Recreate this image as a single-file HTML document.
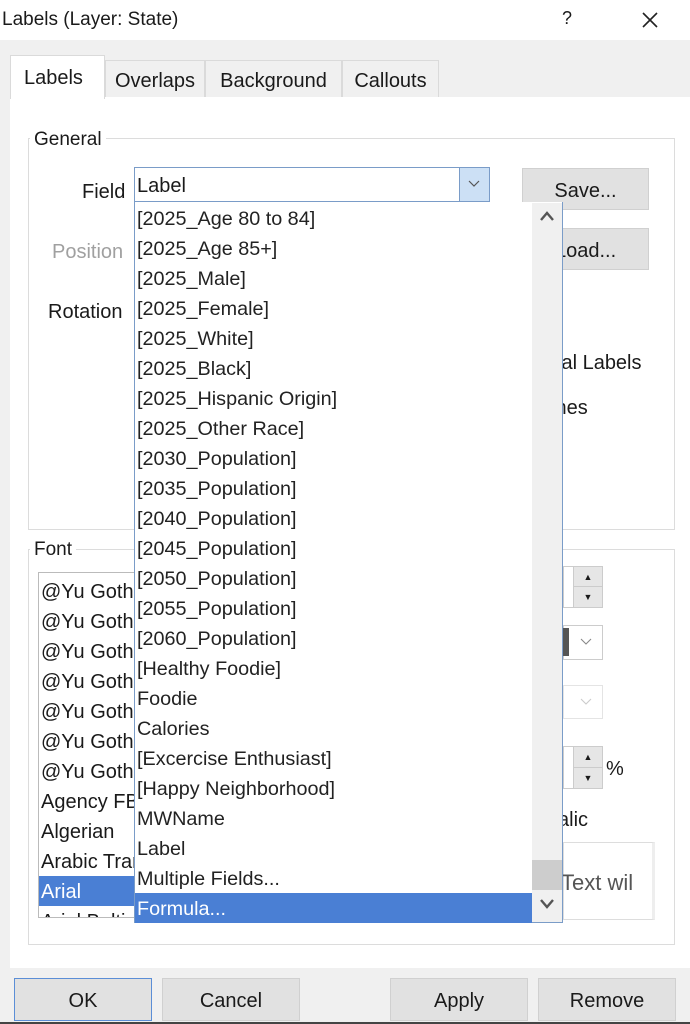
<!DOCTYPE html>
<html><head><meta charset="utf-8"><style>
*{box-sizing:border-box;margin:0;padding:0}
body{width:690px;height:1024px;background:#f0f0f0;font-family:"Liberation Sans",sans-serif;color:#1a1a1a;position:relative;overflow:hidden;font-size:18px}
.a{position:absolute;white-space:nowrap}
.btn{position:absolute;background:#e1e1e1;border:1px solid #d0d0d0;text-align:center;line-height:44px;font-size:20px}
.tab{position:absolute;top:60px;height:37px;background:#f0f0f0;border:1px solid #dadada;border-bottom:none;line-height:40px;font-size:20px;text-align:center}
.grp{position:absolute;border:1px solid #dcdcdc}
.li{height:30px;line-height:32px;padding-left:2px}
.spin{position:absolute;width:30px;background:#e6e6e6;border:1px solid #ccc}
.spin div{height:50%;display:flex;align-items:center;justify-content:center;font-size:9px;border-bottom:1px solid #ccc}
</style></head><body>
<div class="a" style="left:0;top:0;width:690px;height:40px;background:#fff"></div>
<div class="a" style="left:2px;top:9px;font-size:19px">Labels (Layer: State)</div>
<div class="a" style="left:562px;top:8px;font-size:18px">?</div>
<svg class="a" style="left:641px;top:11px" width="18" height="18" viewBox="0 0 18 18"><path d="M2 2L16 16M16 2L2 16" stroke="#222" stroke-width="1.6"/></svg>

<div class="tab" style="left:105px;width:100px">Overlaps</div>
<div class="tab" style="left:205px;width:137px">Background</div>
<div class="tab" style="left:342px;width:97px">Callouts</div>
<div class="a" style="left:10px;top:97px;width:680px;height:871px;background:#fff"></div>
<div class="a" style="left:10px;top:55px;width:95px;height:44px;background:#fff;border:1px solid #dadada;border-bottom:none;font-size:20px;line-height:44px;padding-left:13px">Labels</div>

<div class="grp" style="left:28px;top:138px;width:647px;height:392px"></div>
<div class="a" style="left:30px;top:129px;background:#fff;padding:0 4px;font-size:19px">General</div>
<div class="a" style="left:82px;top:181px;font-size:20px">Field</div>
<div class="a" style="left:52px;top:241px;font-size:20px;color:#a0a0a0">Position</div>
<div class="a" style="left:48px;top:301px;font-size:20px">Rotation</div>
<div class="a" style="left:134px;top:167px;width:356px;height:35px;border:1px solid #7a9cc8;background:#fff"></div>
<div class="a" style="left:137px;top:175px;font-size:20px">Label</div>
<div class="a" style="left:459px;top:168px;width:30px;height:33px;background:#cce0f5;border-left:1px solid #7a9cc8"></div>
<svg class="a" style="left:468px;top:180px" width="12" height="8" viewBox="0 0 12 8"><path d="M1 1L6 6L11 1" stroke="#555" fill="none" stroke-width="1.2"/></svg>
<div class="btn" style="left:522px;top:168px;width:127px;height:42px">Save...</div>
<div class="btn" style="left:522px;top:228px;width:127px;height:42px;text-align:left;padding-left:32px">Load...</div>
<div class="a" style="left:557px;top:352px;font-size:20px">ial Labels</div>
<div class="a" style="left:551px;top:397px;font-size:20px">ines</div>

<div class="grp" style="left:28px;top:549px;width:647px;height:396px"></div>
<div class="a" style="left:30px;top:539px;background:#fff;padding:0 4px;font-size:19px">Font</div>
<div class="a" style="left:38px;top:572px;width:100px;height:346px;border:1px solid #bbb;background:#fff;overflow:hidden;padding-top:3px;font-size:20px">
<div class="li">@Yu Gothic</div><div class="li">@Yu Gothic</div><div class="li">@Yu Gothic</div><div class="li">@Yu Gothic</div><div class="li">@Yu Gothic</div><div class="li">@Yu Gothic</div><div class="li">@Yu Gothic</div><div class="li">Agency FB</div><div class="li">Algerian</div><div class="li">Arabic Transparent</div><div class="li" style="background:#4a7fd4;color:#fff">Arial</div><div class="li">Arial Baltic</div></div>

<div class="a" style="left:563px;top:566px;width:40px;height:42px;border:1px solid #ccc;background:#fff"></div>
<div class="spin" style="left:573px;top:566px;height:42px"><div>▲</div><div style="border:none">▼</div></div>
<div class="a" style="left:563px;top:625px;width:40px;height:35px;border:1px solid #ccc;background:#fff"></div>
<div class="a" style="left:563px;top:628px;width:6px;height:28px;background:#555"></div>
<svg class="a" style="left:580px;top:638px" width="12" height="8" viewBox="0 0 12 8"><path d="M1 1L6 6L11 1" stroke="#888" fill="none" stroke-width="1.1"/></svg>
<div class="a" style="left:563px;top:685px;width:40px;height:34px;border:1px solid #e4e4e4;background:#fff"></div>
<svg class="a" style="left:580px;top:698px" width="12" height="8" viewBox="0 0 12 8"><path d="M1 1L6 6L11 1" stroke="#ccc" fill="none" stroke-width="1.1"/></svg>
<div class="a" style="left:563px;top:746px;width:40px;height:43px;border:1px solid #ccc;background:#fff"></div>
<div class="spin" style="left:573px;top:746px;height:43px"><div>▲</div><div style="border:none">▼</div></div>
<div class="a" style="left:606px;top:758px;font-size:20px">%</div>
<div class="a" style="left:558px;top:809px;font-size:20px">alic</div>
<div class="a" style="left:563px;top:842px;width:92px;height:78px;border:1px solid #ddd;border-right:3px solid #eee;background:#fff"></div>
<div class="a" style="left:561px;top:870px;font-size:22px;color:#555">Text wil</div>

<div class="a" style="left:134px;top:202px;width:429px;height:721px;border:1px solid #7a9cc8;border-top:none;background:#fff;padding-top:1px;font-size:19.8px;color:#222">
<div class="li">[2025_Age 80 to 84]</div><div class="li">[2025_Age 85+]</div><div class="li">[2025_Male]</div><div class="li">[2025_Female]</div><div class="li">[2025_White]</div><div class="li">[2025_Black]</div><div class="li">[2025_Hispanic Origin]</div><div class="li">[2025_Other Race]</div><div class="li">[2030_Population]</div><div class="li">[2035_Population]</div><div class="li">[2040_Population]</div><div class="li">[2045_Population]</div><div class="li">[2050_Population]</div><div class="li">[2055_Population]</div><div class="li">[2060_Population]</div><div class="li">[Healthy Foodie]</div><div class="li">Foodie</div><div class="li">Calories</div><div class="li">[Excercise Enthusiast]</div><div class="li">[Happy Neighborhood]</div><div class="li">MWName</div><div class="li">Label</div><div class="li">Multiple Fields...</div><div class="li" style="background:#4a7fd4;color:#fff;width:397px">Formula...</div>
</div>
<div class="a" style="left:532px;top:203px;width:30px;height:719px;background:#f0f0f0"></div>
<div class="a" style="left:532px;top:860px;width:30px;height:30px;background:#cdcdcd"></div>
<svg class="a" style="left:539px;top:210px" width="16" height="12" viewBox="0 0 16 12"><path d="M2 10L8 3L14 10" stroke="#555" fill="none" stroke-width="2.4"/></svg>
<svg class="a" style="left:539px;top:898px" width="16" height="12" viewBox="0 0 16 12"><path d="M2 2L8 9L14 2" stroke="#555" fill="none" stroke-width="2.4"/></svg>

<div class="btn" style="left:14px;top:978px;width:138px;height:43px;border:1px solid #5b8ed6">OK</div>
<div class="btn" style="left:162px;top:978px;width:138px;height:43px">Cancel</div>
<div class="btn" style="left:390px;top:978px;width:138px;height:43px">Apply</div>
<div class="btn" style="left:538px;top:978px;width:138px;height:43px">Remove</div>
<div class="a" style="left:0;top:1022px;width:690px;height:2px;background:#444"></div>
</body></html>
